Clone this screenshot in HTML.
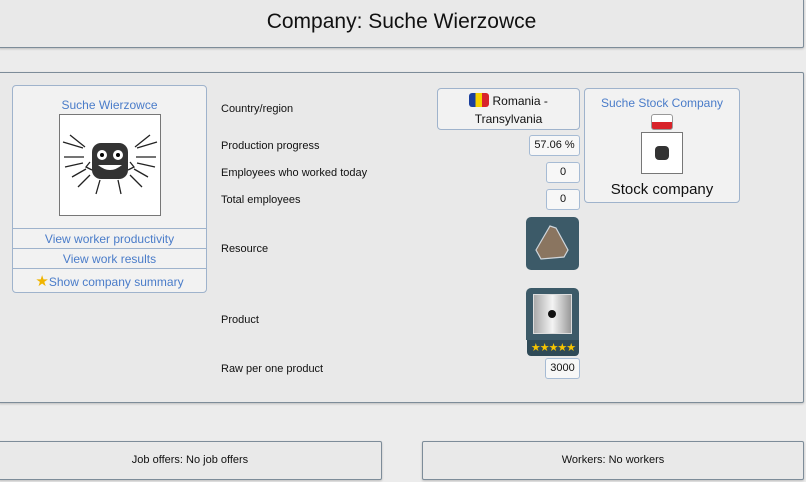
<!DOCTYPE html>
<html><head><meta charset="utf-8"><style>
body{margin:0;width:806px;height:482px;background:#ececec;font-family:"Liberation Sans",sans-serif;color:#111;position:relative;overflow:hidden}
.a{position:absolute;box-sizing:border-box}
.panel{background:#e9e9e9;border:1px solid #7d8c99;border-radius:2px;box-shadow:0 1px 2px rgba(0,0,0,.2)}
.box{background:#f2f2f2;border:1px solid #9fb3cc;border-radius:4px}
.lbl{font-size:11px;left:221px}
.num{background:#f7f7f7;border:1px solid #a6bbd4;border-radius:3px;font-size:11px;text-align:center;line-height:19px}
.lnk{color:#4a7cc9;font-size:12px;text-align:center;left:0;width:100%;border-top:1px solid #9fb3cc}
.icon{background:#3c5a68;border-radius:5px}
</style></head><body>
<div class="a panel" style="left:-2px;top:-2px;width:806px;height:50px;"></div>
<div class="a" style="left:0;top:10px;width:803px;text-align:center;font-size:21px;letter-spacing:0">Company: Suche Wierzowce</div>

<div class="a panel" style="left:-2px;top:72px;width:806px;height:331px;"></div>

<div class="a box" style="left:12px;top:85px;width:195px;height:208px;border-radius:4px">
 <div class="a" style="left:0;top:12px;width:100%;text-align:center;color:#4a7cc9;font-size:12px">Suche Wierzowce</div>
 <div class="a" style="left:46px;top:28px;width:102px;height:102px;background:#fff;border:1px solid #777">
  <svg width="100" height="100" viewBox="0 0 100 100"><g stroke="#222" stroke-width="1.3" fill="none">
  <path d="M3 27l20 6M10 20l15 12M4 42l20 0M5 52l18-4M12 62l14-8M18 72l12-12M97 27l-20 6M90 20l-15 12M96 42l-20 0M95 52l-18-4M88 62l-14-8M82 72l-12-12M40 65l-4 14M58 65l3 14M30 47l-4 5 6 3M70 47l4 5-6 3"/></g>
  <rect x="32" y="28" width="36" height="36" rx="9" fill="#333"/><circle cx="42" cy="40" r="5" fill="#fff"/><circle cx="58" cy="40" r="5" fill="#fff"/><circle cx="42" cy="40" r="2" fill="#000"/><circle cx="58" cy="40" r="2" fill="#000"/><path d="M38 50q12 10 24 0z" fill="#fff"/></svg>
 </div>
 <div class="a lnk" style="top:142px;height:20px;line-height:20px">View worker productivity</div>
 <div class="a lnk" style="top:162px;height:20px;line-height:20px">View work results</div>
 <div class="a lnk" style="top:182px;height:24px;line-height:25px"><span style="color:#f0b400;font-size:15px">★</span>Show company summary</div>
</div>

<div class="a lbl" style="top:103px">Country/region</div>
<div class="a lbl" style="top:140px">Production progress</div>
<div class="a lbl" style="top:167px">Employees who worked today</div>
<div class="a lbl" style="top:194px">Total employees</div>
<div class="a lbl" style="top:243px">Resource</div>
<div class="a lbl" style="top:314px">Product</div>
<div class="a lbl" style="top:363px">Raw per one product</div>

<div class="a box" style="left:437px;top:88px;width:143px;height:42px;font-size:12px;text-align:center;line-height:18px;padding-top:3px">
<span style="display:inline-block;width:20px;height:14px;vertical-align:-2px;border-radius:3px;background:linear-gradient(90deg,#1b3f9e 33%,#f5d000 33% 66%,#d8232a 66%)"></span> Romania -<br>Transylvania</div>
<div class="a num" style="left:529px;top:135px;width:51px;height:21px">57.06 %</div>
<div class="a num" style="left:546px;top:162px;width:34px;height:21px">0</div>
<div class="a num" style="left:546px;top:189px;width:34px;height:21px">0</div>

<div class="a box" style="left:584px;top:88px;width:156px;height:115px;text-align:center">
 <div style="color:#4a7cc9;font-size:12px;margin-top:7px">Suche Stock Company</div>
 <div style="width:20px;height:14px;margin:4px auto 0;border:1px solid #999;border-radius:3px;background:linear-gradient(#fff 50%,#d8232a 50%)"></div>
 <div style="width:40px;height:40px;margin:2px auto 0;background:#fff;border:1px solid #777;position:relative"><div style="position:absolute;left:13px;top:13px;width:14px;height:14px;border-radius:4px;background:#333"></div></div>
 <div style="font-size:15px;margin-top:7px">Stock company</div>
</div>

<div class="a icon" style="left:526px;top:217px;width:53px;height:53px"><svg width="53" height="53"><path d="M10 33L24 9l6 2 12 22-4 7-23 2z" fill="#8a7560" stroke="#cfd6dc" stroke-width="1.2"/></svg></div>
<div class="a icon" style="left:526px;top:288px;width:53px;height:52px;border-radius:5px 5px 0 0">
 <div class="a" style="left:7px;top:6px;width:39px;height:40px;background:linear-gradient(90deg,#aaa,#f4f4f4,#999);border:1px solid #ddd"><div class="a" style="left:14px;top:15px;width:8px;height:8px;border-radius:50%;background:#111"></div></div>
</div>
<div class="a" style="left:527px;top:340px;width:52px;height:16px;background:#2f4a57;border-radius:0 0 4px 4px;font-size:11px;color:#f5c400;letter-spacing:-1px;text-align:center;line-height:16px">★★★★★</div>
<div class="a num" style="left:545px;top:358px;width:35px;height:21px">3000</div>

<div class="a panel" style="left:-2px;top:441px;width:384px;height:39px;font-size:11px;text-align:center;line-height:37px">Job offers: No job offers</div>
<div class="a panel" style="left:422px;top:441px;width:382px;height:39px;font-size:11px;text-align:center;line-height:37px">Workers: No workers</div>
</body></html>
